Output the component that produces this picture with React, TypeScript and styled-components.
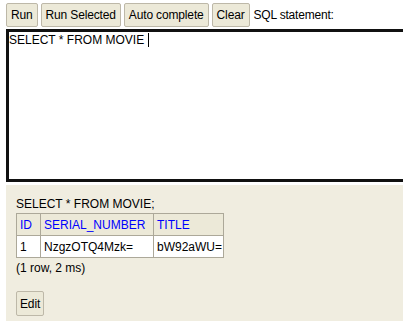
import React from "react";
import styled, { createGlobalStyle } from "styled-components";

const Global = createGlobalStyle`
  html, body {
    margin: 0;
    padding: 0;
    background: #fff;
    overflow: hidden;
  }
  body {
    font-family: "Liberation Sans", Arial, sans-serif;
    font-size: 12px;
  }
`;

const Page = styled.div`
  width: 420px;
`;

const Toolbar = styled.div`
  display: flex;
  align-items: center;
  gap: 3px;
  padding: 3px 0 0 6px;
  height: 24px;
`;

const Button = styled.button`
  font-family: "Liberation Sans", Arial, sans-serif;
  font-size: 12px;
  color: #000;
  background: #ece9d8;
  border: 1px solid #bdb8a8;
  border-radius: 2px;
  height: 24px;
  padding: 0 4px;
  margin: 0;
  letter-spacing: -0.15px;
`;

const Label = styled.span`
  margin-left: 1px;
  color: #000;
  letter-spacing: -0.2px;
`;

const Editor = styled.div`
  margin: 2px 0 0 6px;
  height: 146px;
  border: 3px solid #111;
  border-right: none;
  padding: 1px 0 0 0;
  color: #000;
`;

const Caret = styled.span`
  display: inline-block;
  width: 1px;
  height: 14px;
  background: #000;
  margin-left: 4px;
  vertical-align: -3px;
`;

const Result = styled.div`
  margin: 3px 0 0 6px;
  background: #f0ede0;
  height: 140px;
  padding: 12px 0 0 10px;
`;

const Query = styled.div`
  margin-bottom: 2px;
`;

const Table = styled.table`
  border-collapse: collapse;
  table-layout: fixed;
  font-size: 12px;
  background: #fff;
`;

const Th = styled.th<{ $w: number }>`
  width: ${(p) => p.$w}px;
  text-align: left;
  font-weight: normal;
  color: #0000ff;
  background: #ece9d8;
  border: 1px solid #aca899;
  padding: 3px 0 2px 3px;
  height: 16px;
  white-space: nowrap;
`;

const Td = styled.td`
  border: 1px solid #aca899;
  padding: 3px 0 2px 3px;
  height: 16px;
  white-space: nowrap;
`;

const Stats = styled.div`
  margin-top: 3px;
`;

const EditButton = styled(Button)`
  margin-top: 16px;
  height: 25px;
  padding: 0 3px;
`;

export default function App() {
  return (
    <Page>
      <Global />
      <Toolbar>
        <Button>Run</Button>
        <Button>Run Selected</Button>
        <Button>Auto complete</Button>
        <Button>Clear</Button>
        <Label>SQL statement:</Label>
      </Toolbar>
      <Editor>
        SELECT * FROM MOVIE<Caret />
      </Editor>
      <Result>
        <Query>SELECT * FROM MOVIE;</Query>
        <Table>
          <thead>
            <tr>
              <Th $w={20}>ID</Th>
              <Th $w={109}>SERIAL_NUMBER</Th>
              <Th $w={66}>TITLE</Th>
            </tr>
          </thead>
          <tbody>
            <tr>
              <Td>1</Td>
              <Td>NzgzOTQ4Mzk=</Td>
              <Td>bW92aWU=</Td>
            </tr>
          </tbody>
        </Table>
        <Stats>(1 row, 2 ms)</Stats>
        <EditButton>Edit</EditButton>
      </Result>
    </Page>
  );
}
